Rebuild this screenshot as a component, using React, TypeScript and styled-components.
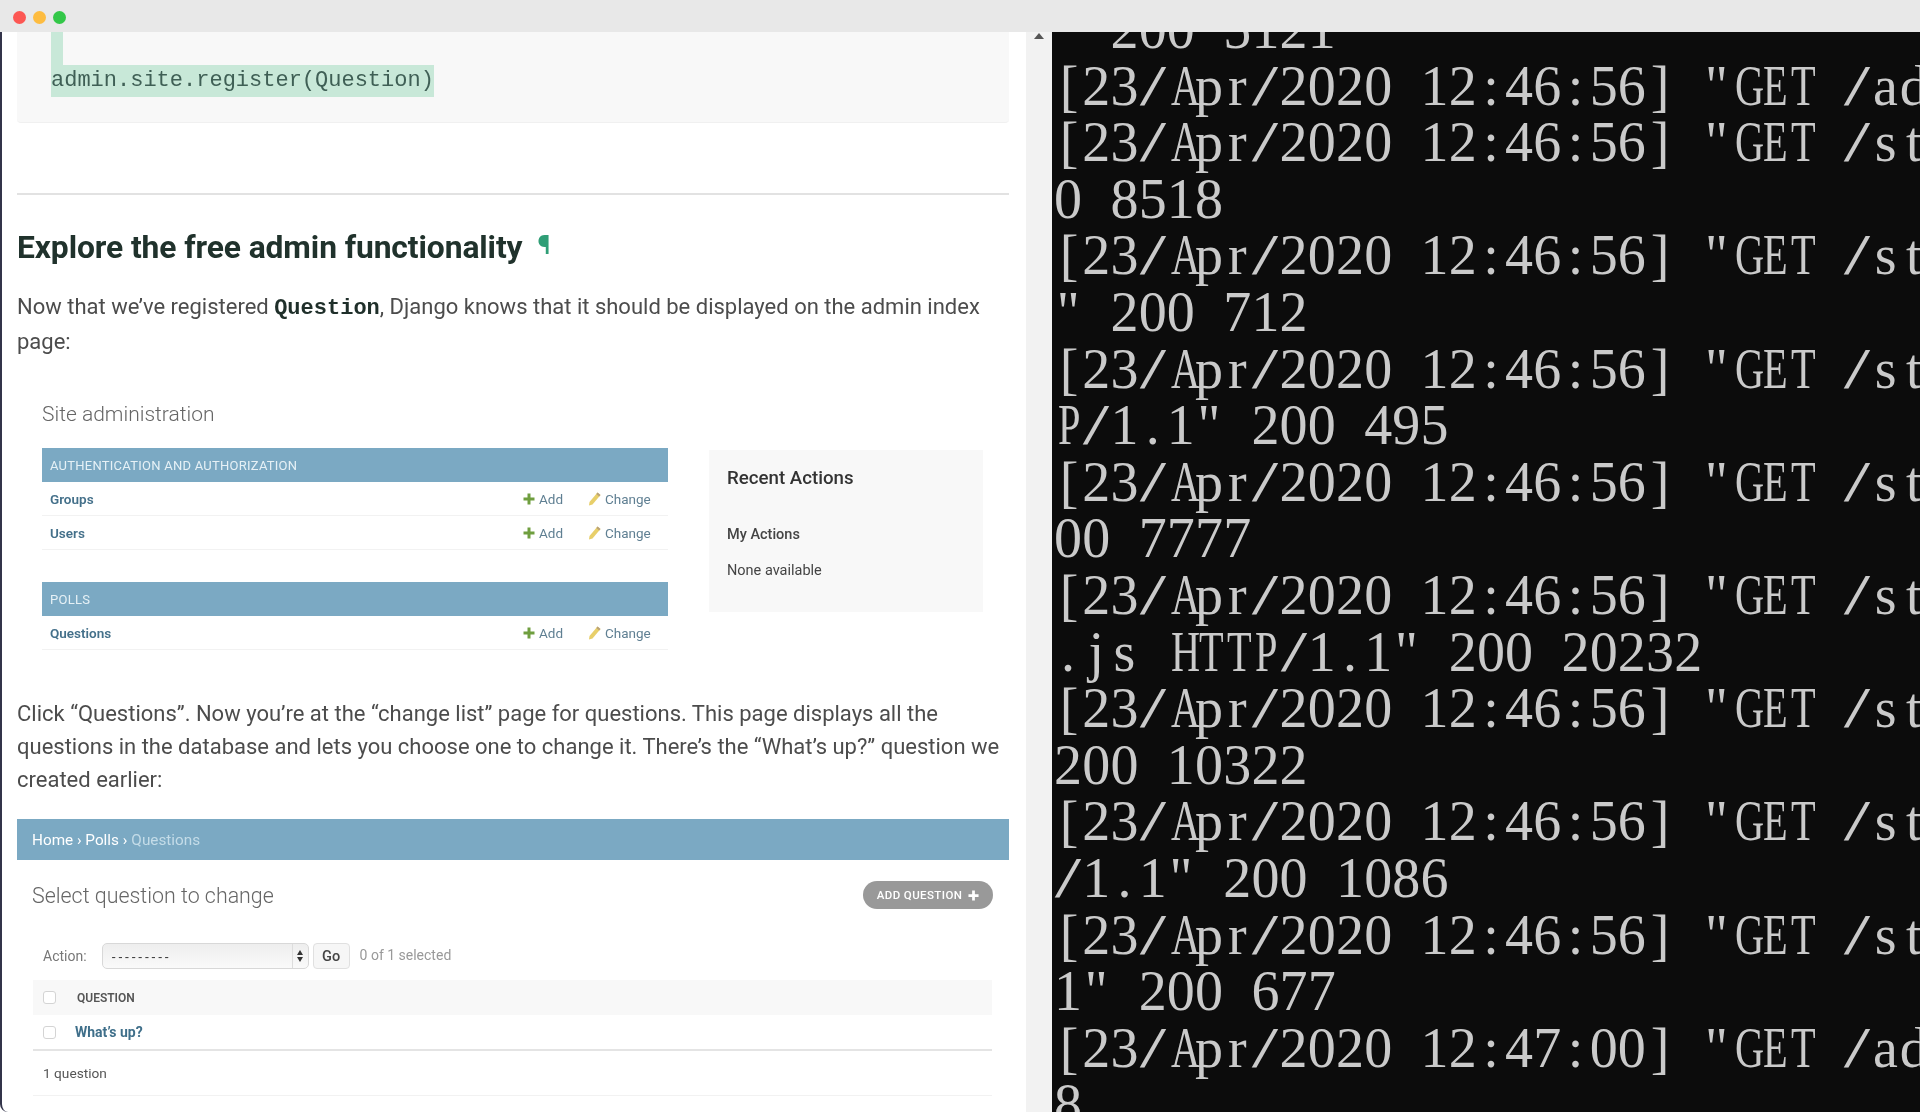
import styled, { createGlobalStyle, css } from 'styled-components';

const GlobalStyle = createGlobalStyle`
  html, body {
    margin: 0;
    padding: 0;
    background: #ffffff;
  }
  * {
    box-sizing: border-box;
  }
`;

const Window = styled.div`
  display: flex;
  flex-direction: column;
  width: 1920px;
  height: 1112px;
  overflow: hidden;
  font-family: Roboto, "Liberation Sans", sans-serif;
`;

const TitleBar = styled.div`
  display: flex;
  align-items: center;
  gap: 7px;
  flex: 0 0 32px;
  padding: 2px 0 0 13px;
  background: #e8e8e8;
`;

const Dot = styled.span<{ $color: string }>`
  width: 13px;
  height: 13px;
  border-radius: 50%;
  background: ${props => props.$color};
`;

const Body = styled.div`
  display: flex;
  flex: 1;
  min-height: 0;
`;

/* the recording is soft, so the content gets a touch of blur */
const Page = styled.div`
  flex: 0 0 1026px;
  padding: 0 17px 0 15px;
  border-left: 2px solid #33344a;
  border-bottom-left-radius: 8px;
  background: #ffffff;
  overflow: hidden;
  color: #4c4c4c;
  filter: blur(0.45px);
`;

const ScrollTrack = styled.div`
  display: flex;
  justify-content: center;
  flex: 0 0 26px;
  background: #f2f2f2;
`;

const ScrollArrow = styled.span`
  width: 0;
  height: 0;
  margin-top: 1px;
  border-left: 5px solid transparent;
  border-right: 5px solid transparent;
  border-bottom: 6px solid #555555;
`;

/* code sample */
const CodeBlock = styled.div`
  height: 91px;
  padding-left: 34px;
  background: #f8f8f8;
  border-bottom: 1px solid #f0f0f0;
  border-radius: 0 0 4px 4px;
`;

const HighlightStub = styled.div`
  width: 12px;
  height: 33px;
  background: #c8e8d8;
`;

const CodeLine = styled.div`
  width: 383px;
  height: 32px;
  background: #c8e8d8;
  color: #3f5f55;
  font-family: "Liberation Mono", monospace;
  font-size: 22px;
  line-height: 32px;
`;

const Rule = styled.hr`
  margin: 70px 0 0 0;
  border: 0;
  border-top: 2px solid #e2e2e2;
`;

const Heading = styled.h2`
  display: flex;
  align-items: flex-start;
  margin: 34px 0 0 0;
  color: #20322c;
  font-size: 31.8px;
  font-weight: 700;
  line-height: 36px;
  letter-spacing: -0.1px;
`;

const Pilcrow = styled.span`
  margin: -2px 0 0 15px;
  color: #2f9e76;
  font-size: 26px;
  font-weight: 700;
  line-height: 36px;
`;

const Paragraph = styled.p<{ $top: number; $leading: number }>`
  width: 1000px;
  margin: ${props => props.$top}px 0 0 0;
  font-size: 22px;
  line-height: ${props => props.$leading}px;
`;

const Code = styled.code`
  color: #1f2f2a;
  font-family: "Liberation Mono", monospace;
  font-size: 22px;
  font-weight: 700;
  line-height: 1;
`;

/* admin index screenshot */
const AdminIndex = styled.div`
  display: flex;
  flex-direction: column;
  margin-top: 41px;
  padding-left: 25px;
`;

const SiteTitle = styled.div`
  color: #666666;
  font-size: 21px;
  font-weight: 300;
  line-height: 28px;
`;

const AdminColumns = styled.div`
  display: flex;
  gap: 41px;
  margin-top: 20px;
`;

const Modules = styled.div`
  display: flex;
  flex-direction: column;
  gap: 32px;
  width: 626px;
`;

const BlueBar = styled.div`
  display: flex;
  align-items: center;
  height: 34px;
  padding-left: 8px;
  background: #7ba9c3;
  color: #e6f1f6;
  font-size: 13px;
  letter-spacing: 0.25px;
`;

const ModuleRow = styled.div`
  display: flex;
  align-items: center;
  height: 34px;
  padding: 0 17px 0 8px;
  border-bottom: 1px solid #f2f2f2;
`;

const ModuleName = styled.span`
  flex: 1;
  color: #44708a;
  font-size: 13.5px;
  font-weight: 600;
`;

const RowAction = styled.span<{ $width: number }>`
  display: flex;
  align-items: center;
  gap: 4px;
  width: ${props => props.$width}px;
  color: #5f7f92;
  font-size: 13.5px;
`;

const RecentPanel = styled.div`
  display: flex;
  flex-direction: column;
  width: 274px;
  height: 162px;
  margin-top: 2px;
  padding: 16px 18px;
  background: #f8f8f8;
  color: #444444;
`;

const RecentTitle = styled.div`
  color: #333333;
  font-size: 18.7px;
  font-weight: 500;
  line-height: 24px;
`;

const RecentLabel = styled.div<{ $top: number; $strong?: boolean }>`
  margin-top: ${props => props.$top}px;
  font-size: 14.5px;
  font-weight: ${props => (props.$strong ? 500 : 400)};
  line-height: 18px;
`;

/* change list screenshot */
const Breadcrumbs = styled.div`
  display: flex;
  align-items: center;
  gap: 4px;
  height: 41px;
  margin-top: 23px;
  padding: 0 0 0 15px;
  background: #7ba9c3;
  color: #ffffff;
  font-size: 15.3px;
`;

const CrumbCurrent = styled.span`
  color: #c4dce8;
`;

const ChangeHeader = styled.div`
  display: flex;
  align-items: center;
  justify-content: space-between;
  margin-top: 21px;
  padding: 0 16px 0 15px;
  height: 28px;
`;

const ChangeTitle = styled.div`
  color: #666666;
  font-size: 21.4px;
  font-weight: 300;
`;

const AddButton = styled.div`
  display: flex;
  align-items: center;
  justify-content: center;
  gap: 6px;
  width: 130px;
  height: 28px;
  border-radius: 14px;
  background: #999999;
  color: #ffffff;
  font-size: 11.5px;
  font-weight: 500;
  letter-spacing: 0.4px;
`;

const ActionBar = styled.div`
  display: flex;
  align-items: center;
  height: 26px;
  margin-top: 34px;
  padding-left: 26px;
  color: #777777;
  font-size: 14px;
`;

const SelectBox = styled.div`
  display: flex;
  align-items: center;
  justify-content: space-between;
  width: 207px;
  height: 26px;
  margin-left: 15px;
  padding: 0 5px 0 9px;
  border: 1px solid #d8d8d8;
  border-radius: 5px;
  background: linear-gradient(#eeeeee, #fafafa);
  color: #333333;
  font-family: "Liberation Sans", sans-serif;
  font-size: 13px;
  letter-spacing: 2.3px;
`;

const SelectArrows = styled.span`
  display: flex;
  flex-direction: column;
  align-items: center;
  justify-content: center;
  gap: 2px;
  height: 24px;
  padding-left: 4px;
  border-left: 1px solid #dddddd;
`;

const ArrowTip = styled.span<{ $down?: boolean }>`
  width: 0;
  height: 0;
  border-left: 3.5px solid transparent;
  border-right: 3.5px solid transparent;
  ${props =>
    props.$down
      ? css`border-top: 5px solid #333333;`
      : css`border-bottom: 5px solid #333333;`}
`;

const GoButton = styled.div`
  display: flex;
  align-items: center;
  justify-content: center;
  width: 37px;
  height: 26px;
  margin-left: 4px;
  border: 1px solid #e0e0e0;
  border-radius: 4px;
  background: #f6f6f6;
  color: #444444;
  font-size: 14.5px;
  font-weight: 500;
`;

const SelectedCount = styled.span`
  margin: -2px 0 0 10px;
  color: #999999;
  font-size: 14px;
`;

const ResultsTable = styled.div`
  display: flex;
  flex-direction: column;
  width: 959px;
  margin: 11px 0 0 16px;
`;

const ResultsHead = styled.div`
  display: flex;
  align-items: center;
  gap: 21px;
  height: 35px;
  padding-left: 10px;
  background: #f8f8f8;
  color: #555555;
  font-size: 12px;
  font-weight: 600;
`;

const ResultsRow = styled.div`
  display: flex;
  align-items: center;
  gap: 19px;
  height: 36px;
  padding-left: 10px;
  border-bottom: 2px solid #e4e4e4;
  color: #3f6f8a;
  font-size: 14px;
  font-weight: 700;
`;

const CheckBox = styled.span`
  flex: 0 0 13px;
  height: 13px;
  border: 1px solid #d4d4d4;
  border-radius: 3px;
  background: #ffffff;
`;

const ResultsFooter = styled.div`
  display: flex;
  align-items: center;
  height: 45px;
  padding-left: 10px;
  border-bottom: 1px solid #f2f2f2;
  color: #555555;
  font-size: 13.7px;
`;

/* console on the right */
const Terminal = styled.div`
  flex: 1;
  background: #0c0c0c;
  overflow: hidden;
  color: #cacaca;
  font-family: "Liberation Serif", serif;
  font-size: 56px;
  filter: blur(0.4px);
`;

const TerminalLines = styled.div`
  display: flex;
  flex-direction: column;
  margin-top: -31px;
  padding-left: 2px;
`;

const TerminalLine = styled.div`
  flex: 0 0 56.6px;
  height: 56.6px;
  line-height: 56.6px;
  white-space: nowrap;
`;

const glyphStyles = {
  plain: css``,
  upper: css`transform: scaleX(0.72);`,
  slash: css`transform: scaleX(1.7);`,
  bracket: css`transform: translateX(1px);`,
};

type GlyphKind = keyof typeof glyphStyles;

const Glyph = styled.span<{ $kind: GlyphKind }>`
  display: inline-block;
  width: 28.2px;
  text-align: center;
  ${props => glyphStyles[props.$kind]}
`;

const glyphKind = (ch: string): GlyphKind => {
  if (ch === '/') return 'slash';
  if (ch === '[') return 'bracket';
  if (/[A-Z]/.test(ch)) return 'upper';
  return 'plain';
};

const PlusIcon = ({ color = '#6f9e3f', size = 12 }: { color?: string; size?: number }) => (
  <svg width={size} height={size} viewBox="0 0 12 12">
    <path d="M4.5 0.5h3v4h4v3h-4v4h-3v-4h-4v-3h4z" fill={color} />
  </svg>
);

const PencilIcon = () => (
  <svg width="13" height="14" viewBox="0 0 13 14">
    <path d="M9.5 0.5l3 2.5-8 9.5-3.5 1 0.5-3.5z" fill="#e8cf6a" />
    <path d="M9.5 0.5l3 2.5-1.2 1.4-3-2.5z" fill="#b9a27a" />
  </svg>
);

const Actions = () => (
  <>
    <RowAction $width={65}><PlusIcon />Add</RowAction>
    <RowAction $width={63}><PencilIcon />Change</RowAction>
  </>
);

const stamp = (time: string) => `[23/Apr/2020 ${time}]`;

const consoleLines = [
  '" 200 5121',
  `${stamp('12:46:56')} "GET /ad`,
  `${stamp('12:46:56')} "GET /st`,
  '0 8518',
  `${stamp('12:46:56')} "GET /st`,
  '" 200 712',
  `${stamp('12:46:56')} "GET /st`,
  'P/1.1" 200 495',
  `${stamp('12:46:56')} "GET /st`,
  '00 7777',
  `${stamp('12:46:56')} "GET /st`,
  '.js HTTP/1.1" 200 20232',
  `${stamp('12:46:56')} "GET /st`,
  '200 10322',
  `${stamp('12:46:56')} "GET /st`,
  '/1.1" 200 1086',
  `${stamp('12:46:56')} "GET /st`,
  '1" 200 677',
  `${stamp('12:47:00')} "GET /ad`,
  '8',
];

const App = () => (
  <Window>
    <GlobalStyle />
    <TitleBar>
      <Dot $color="#fc5753" />
      <Dot $color="#fdbc40" />
      <Dot $color="#33c748" />
    </TitleBar>
    <Body>
      <Page>
        <CodeBlock>
          <HighlightStub />
          <CodeLine>admin.site.register(Question)</CodeLine>
        </CodeBlock>
        <Rule />
        <Heading>
          Explore the free admin functionality
          <Pilcrow>¶</Pilcrow>
        </Heading>
        <Paragraph $top={24} $leading={35}>
          Now that we’ve registered <Code>Question</Code>, Django knows that it should be displayed on the admin index page:
        </Paragraph>
        <AdminIndex>
          <SiteTitle>Site administration</SiteTitle>
          <AdminColumns>
            <Modules>
              <div>
                <BlueBar>AUTHENTICATION AND AUTHORIZATION</BlueBar>
                <ModuleRow><ModuleName>Groups</ModuleName><Actions /></ModuleRow>
                <ModuleRow><ModuleName>Users</ModuleName><Actions /></ModuleRow>
              </div>
              <div>
                <BlueBar>POLLS</BlueBar>
                <ModuleRow><ModuleName>Questions</ModuleName><Actions /></ModuleRow>
              </div>
            </Modules>
            <RecentPanel>
              <RecentTitle>Recent Actions</RecentTitle>
              <RecentLabel $top={36} $strong>My Actions</RecentLabel>
              <RecentLabel $top={18}>None available</RecentLabel>
            </RecentPanel>
          </AdminColumns>
        </AdminIndex>
        <Paragraph $top={47} $leading={33}>
          Click “Questions”. Now you’re at the “change list” page for questions. This page displays all the questions in the database and lets you choose one to change it. There’s the “What’s up?” question we created earlier:
        </Paragraph>
        <Breadcrumbs>
          Home › Polls › <CrumbCurrent>Questions</CrumbCurrent>
        </Breadcrumbs>
        <ChangeHeader>
          <ChangeTitle>Select question to change</ChangeTitle>
          <AddButton>ADD QUESTION <PlusIcon color="#ffffff" size={11} /></AddButton>
        </ChangeHeader>
        <ActionBar>
          Action:
          <SelectBox>
            ---------
            <SelectArrows><ArrowTip /><ArrowTip $down /></SelectArrows>
          </SelectBox>
          <GoButton>Go</GoButton>
          <SelectedCount>0 of 1 selected</SelectedCount>
        </ActionBar>
        <ResultsTable>
          <ResultsHead><CheckBox />QUESTION</ResultsHead>
          <ResultsRow><CheckBox />What’s up?</ResultsRow>
          <ResultsFooter>1 question</ResultsFooter>
        </ResultsTable>
      </Page>
      <ScrollTrack>
        <ScrollArrow />
      </ScrollTrack>
      <Terminal>
        <TerminalLines>
          {consoleLines.map((line, i) => (
            <TerminalLine key={i}>
              {Array.from(line).map((ch, j) => (
                <Glyph key={j} $kind={glyphKind(ch)}>{ch === ' ' ? '\u00a0' : ch}</Glyph>
              ))}
            </TerminalLine>
          ))}
        </TerminalLines>
      </Terminal>
    </Body>
  </Window>
);

export default App;
